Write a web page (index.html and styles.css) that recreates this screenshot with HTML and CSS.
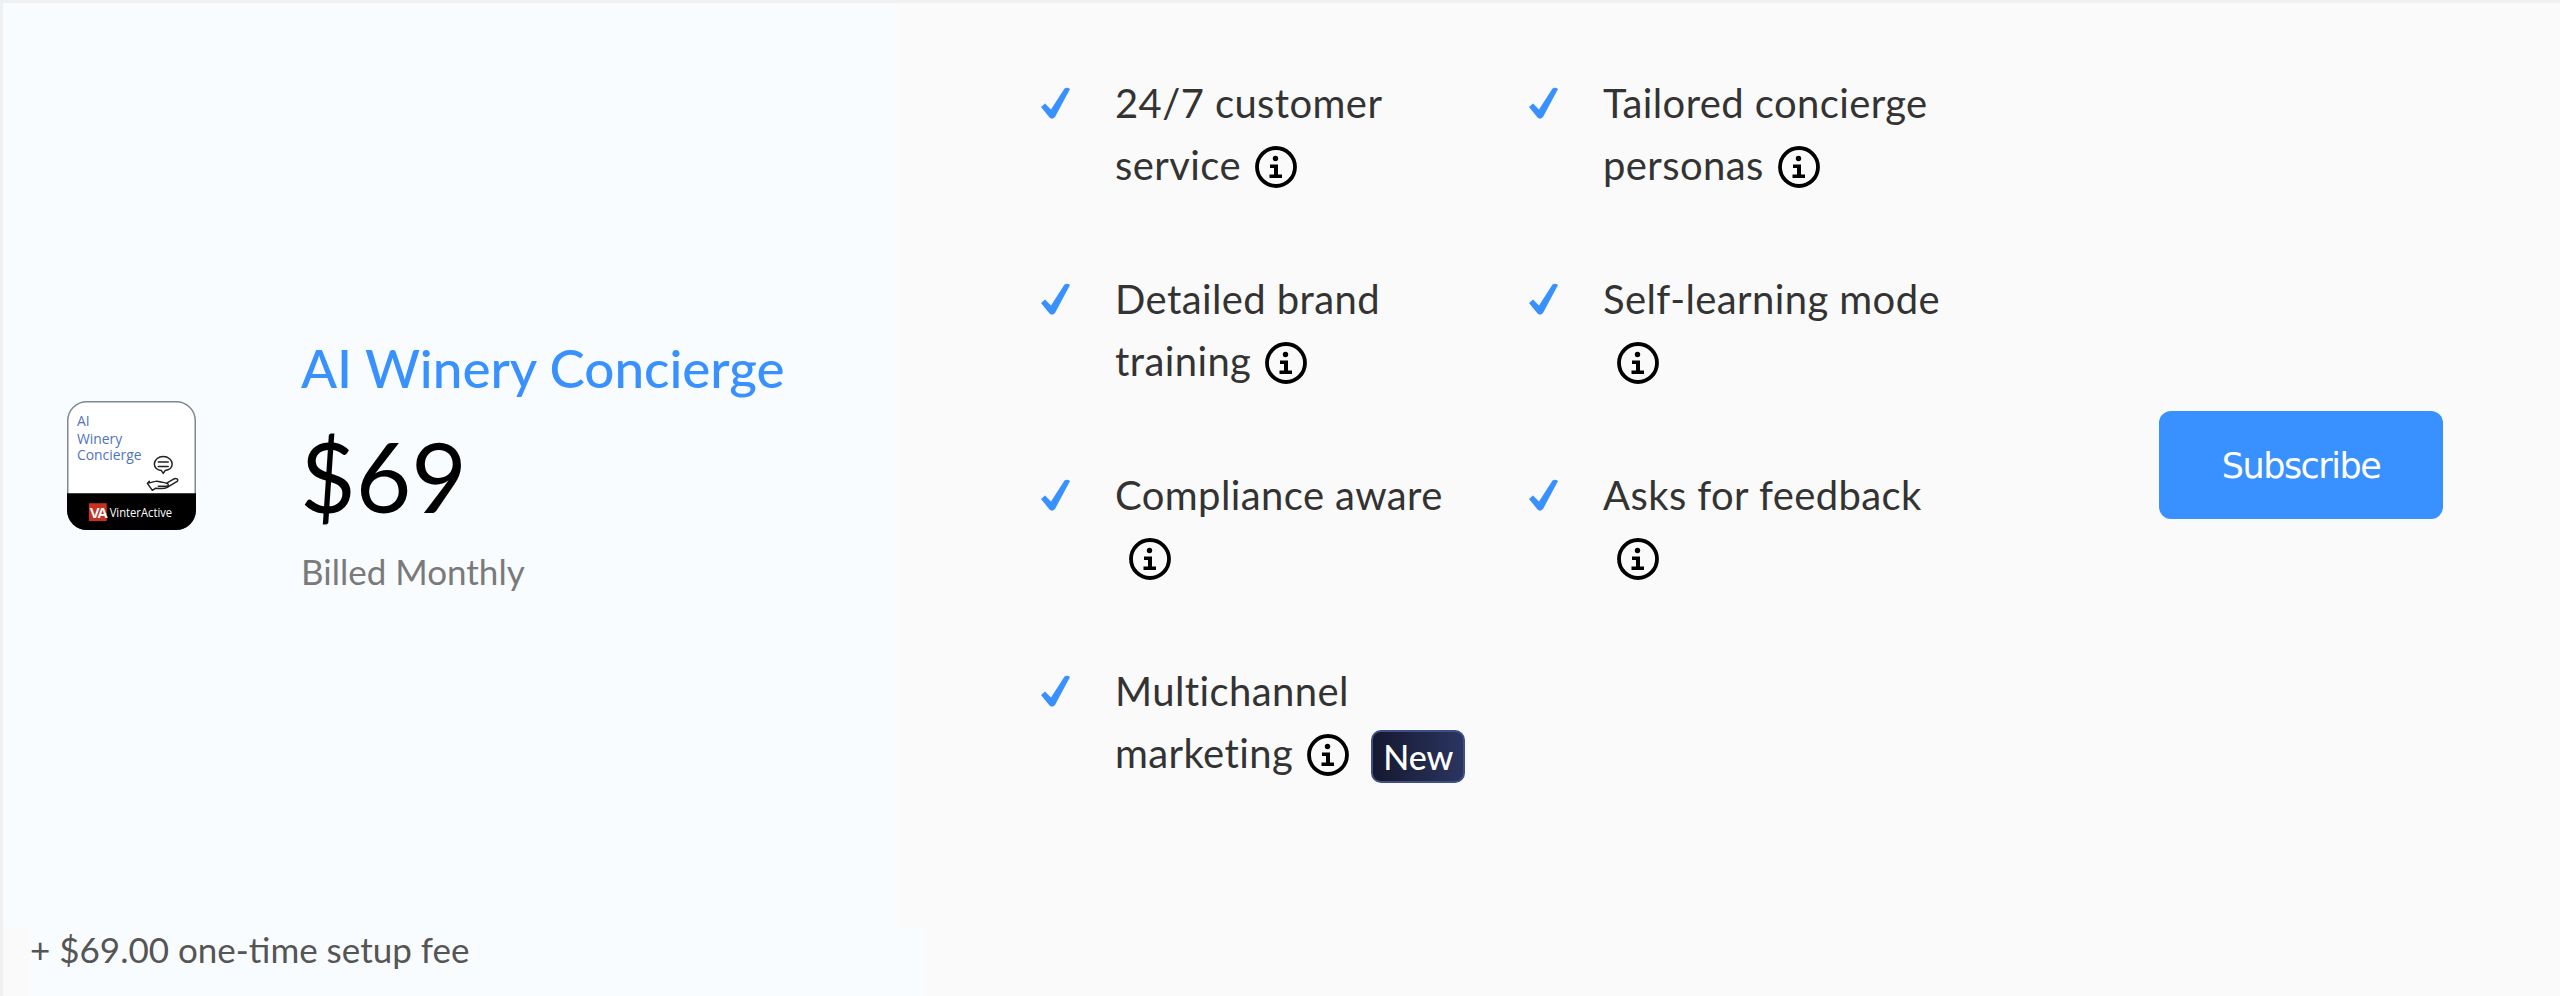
FILE: index.html
```html
<!DOCTYPE html>
<html lang="en">
<head>
  <meta charset="UTF-8" />
  <title>AI Winery Concierge</title>
  <link rel="stylesheet" href="styles.css">
</head>
<body>
  <svg class="icon-defs" width="0" height="0">
    <symbol id="check" viewBox="0 0 30 32">
      <path d="M1 20 L5 16.500 L11 22.500 L24.500 1.500 Q27.500 0 30 2 L15 30 Q12 33 9.500 30.500 Z" fill="#3991ff"/>
    </symbol>
    <symbol id="info" viewBox="0 0 42 42">
      <circle cx="21" cy="21" r="19" fill="none" stroke="#000" stroke-width="3.8"/>
      <circle cx="20.500" cy="12.500" r="2.700" fill="#000"/>
      <path d="M15 18.500h8v10h4v3.500H14.500v-3.500h4.500v-6.500h-4z" fill="#000"/>
    </symbol>
  </svg>

  <main class="plan-card">
    <div class="plan-row">
      <section class="plan-summary">
        <svg class="plan-logo" viewBox="0 0 130 130" role="img" aria-label="AI Winery Concierge">
          <path d="M20 .75h90A19.250 19.250 0 0 1 129.250 20v90a19.250 19.250 0 0 1-19.250 19.250H20A19.250 19.250 0 0 1 .75 110V20A19.250 19.250 0 0 1 20 .75z" fill="#fff" stroke="#7f8794" stroke-width="1.500"/>
          <path d="M0 93h130v17a20 20 0 0 1-20 20H20a20 20 0 0 1-20-20z" fill="#000"/>
          <text class="logo-title" x="10" y="25">AI</text>
          <text class="logo-title" x="10" y="43">Winery</text>
          <text class="logo-title" x="10" y="59">Concierge</text>
          <g fill="none" stroke="#222" stroke-width="1.500" stroke-linecap="round" stroke-linejoin="round">
            <path d="M97 73l-2-3c-4 0-7-3-7-6.500 0-4 4-7.500 9-7.500s9 3.500 9 7.500c0 3.500-3 6-7 6.500z"/>
            <path d="M92 61.500h10M92 66h10"/>
            <path d="M81 83l8-2c3-1 5 1 8 1l4 1c2 1 1 3-1 3h-8M83 81l-2 2 5 7 3-2c5 0 9 1 12-1l10-6c2-2-1-4-4-2l-7 4"/>
          </g>
          <rect x="22" y="103" width="18" height="18" fill="#c8321f"/>
          <text class="logo-mark" x="23" y="118">VA</text>
          <text class="logo-brand" x="43" y="117" textLength="63" lengthAdjust="spacingAndGlyphs">VinterActive</text>
        </svg>
        <div class="plan-info">
          <h1 class="plan-name">AI Winery Concierge</h1>
          <div class="plan-price">$69</div>
          <div class="plan-billing">Billed Monthly</div>
        </div>
      </section>

      <section class="plan-features">
        <ul class="feature-col">
          <li class="feature"><svg class="check"><use href="#check"/></svg><span>24/7 customer<br>service<svg class="info"><use href="#info"/></svg></span></li>
          <li class="feature"><svg class="check"><use href="#check"/></svg><span>Detailed brand<br>training<svg class="info"><use href="#info"/></svg></span></li>
          <li class="feature"><svg class="check"><use href="#check"/></svg><span>Compliance aware<br><svg class="info"><use href="#info"/></svg></span></li>
          <li class="feature"><svg class="check"><use href="#check"/></svg><span>Multichannel<br>marketing<svg class="info"><use href="#info"/></svg><span class="badge-new">New</span></span></li>
        </ul>
        <ul class="feature-col">
          <li class="feature"><svg class="check"><use href="#check"/></svg><span>Tailored concierge<br>personas<svg class="info"><use href="#info"/></svg></span></li>
          <li class="feature"><svg class="check"><use href="#check"/></svg><span>Self-learning mode<br><svg class="info"><use href="#info"/></svg></span></li>
          <li class="feature"><svg class="check"><use href="#check"/></svg><span>Asks for feedback<br><svg class="info"><use href="#info"/></svg></span></li>
        </ul>
      </section>

      <button class="subscribe-btn">Subscribe</button>
    </div>

    <div class="setup-fee">+ $69.00 one-time setup fee</div>
  </main>
</body>
</html>
```

FILE: styles.css
```css
* {
  box-sizing: border-box;
  margin: 0;
  padding: 0;
}

body {
  font-family: "Lato", "Noto Sans", sans-serif;
  background: #f0f0f0;
  color: #333;
  height: 996px;
  overflow: hidden;
  padding: 3px 0 0 3px;
}

.icon-defs {
  display: block;
  height: 0;
  position: absolute;
}

.plan-card {
  height: 993px;
  background: #fafafa;
}

.plan-row {
  display: flex;
  height: 924px;
}

/* Left panel */
.plan-summary {
  width: 895px;
  flex-shrink: 0;
  display: flex;
  align-items: center;
  gap: 105px;
  padding-left: 64px;
  background: #f8fcff;
}

.plan-logo {
  width: 129px;
  height: 129px;
  flex-shrink: 0;
}

.logo-title {
  font-family: "Open Sans", sans-serif;
  font-size: 14px;
  fill: #4f73bf;
}

.logo-mark {
  font-family: "Liberation Sans", sans-serif;
  font-size: 15px;
  font-weight: bold;
  fill: #fff;
  letter-spacing: -1.500px;
}

.logo-brand {
  font-family: "Open Sans", sans-serif;
  font-size: 13px;
  fill: #fff;
}

.plan-name {
  font-size: 53px;
  font-weight: 500;
  color: #3991ff;
  line-height: 64px;
}

.plan-price {
  font-size: 96px;
  color: #000;
  line-height: 116px;
  margin: 18px 0 0 -1px;
}

.plan-billing {
  font-size: 35px;
  color: #7a7a7a;
  line-height: 46px;
  margin-top: 14px;
}

/* Feature list */
.plan-features {
  display: flex;
  padding: 69px 0 0 142px;
}

.feature-col {
  list-style: none;
  width: 488px;
  display: flex;
  flex-direction: column;
  gap: 72px;
}

.feature {
  display: flex;
  font-size: 40px;
  line-height: 62px;
  letter-spacing: 0.4px;
}

.check {
  width: 30px;
  height: 32px;
  margin: 15px 45px 0 0;
  flex-shrink: 0;
}

.info {
  width: 42px;
  height: 42px;
  margin-left: 14px;
  vertical-align: -8px;
}

.badge-new {
  display: inline-block;
  margin-left: 22px;
  padding: 0 10px;
  height: 53px;
  line-height: 49px;
  font-size: 34px;
  font-weight: 500;
  color: #fff;
  letter-spacing: 0;
  background: linear-gradient(90deg, #15182f, #2a3560);
  border: 2px solid #3d4f85;
  border-radius: 10px;
  vertical-align: -2px;
}

/* Subscribe */
.subscribe-btn {
  align-self: center;
  margin: 0 117px 0 auto;
  padding-top: 2px;
  width: 284px;
  height: 108px;
  background: #3991ff;
  color: #fff;
  border: none;
  border-radius: 12px;
  font-family: "DejaVu Sans", sans-serif;
  font-size: 35px;
  letter-spacing: -1.500px;
}

.setup-fee {
  margin-left: 27px;
  width: 895px;
  height: 69px;
  font-size: 35px;
  line-height: 44px;
  color: #555;
  background: #f8fcff;
}
```
